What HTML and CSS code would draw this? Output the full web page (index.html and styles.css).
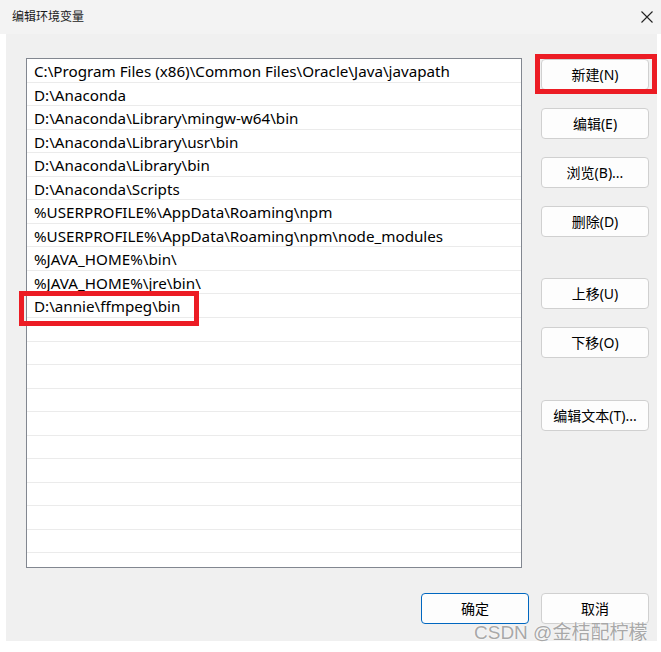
FILE: index.html
```html
<!DOCTYPE html>
<html lang="zh-CN">
<head>
<meta charset="utf-8">
<title>编辑环境变量</title>
<link rel="stylesheet" href="styles.css">
</head>
<body>
<div class="window">
  <div class="titlebar">
    <span class="title">编辑环境变量</span>
    <svg class="close" width="12" height="12" viewBox="0 0 12 12"><path d="M0.5 0.5 L11.5 11.5 M11.5 0.5 L0.5 11.5" stroke="#222" stroke-width="1.1" fill="none"/></svg>
  </div>
  <div class="content">
    <div class="main">
      <div class="list">
        <div class="row">C:\Program Files (x86)\Common Files\Oracle\Java\javapath</div>
        <div class="row">D:\Anaconda</div>
        <div class="row">D:\Anaconda\Library\mingw-w64\bin</div>
        <div class="row">D:\Anaconda\Library\usr\bin</div>
        <div class="row">D:\Anaconda\Library\bin</div>
        <div class="row">D:\Anaconda\Scripts</div>
        <div class="row">%USERPROFILE%\AppData\Roaming\npm</div>
        <div class="row">%USERPROFILE%\AppData\Roaming\npm\node_modules</div>
        <div class="row">%JAVA_HOME%\bin\</div>
        <div class="row">%JAVA_HOME%\jre\bin\</div>
        <div class="row">D:\annie\ffmpeg\bin</div>
        <div class="row"></div><div class="row"></div><div class="row"></div>
        <div class="row"></div><div class="row"></div><div class="row"></div>
        <div class="row"></div><div class="row"></div><div class="row"></div>
        <div class="row"></div><div class="row"></div>
      </div>
      <div class="buttons">
        <button class="btn">新建(N)</button>
        <button class="btn">编辑(E)</button>
        <button class="btn">浏览(B)...</button>
        <button class="btn">删除(D)</button>
        <button class="btn gap-lg">上移(U)</button>
        <button class="btn">下移(O)</button>
        <button class="btn gap-xl">编辑文本(T)...</button>
      </div>
    </div>
    <div class="footer">
      <button class="btn primary">确定</button>
      <button class="btn">取消</button>
    </div>
  </div>
  <div class="mark mark-new"></div>
  <div class="mark mark-row"></div>
  <div class="watermark">CSDN @金桔配柠檬</div>
</div>
</body>
</html>
```
FILE: styles.css
```css
html, body {
  margin: 0;
  padding: 0;
  background: #ffffff;
}
body {
  width: 661px;
  height: 652px;
  overflow: hidden;
  font-family: "Noto Sans", "Noto Sans CJK SC", sans-serif;
  color: #000;
}
.window {
  position: relative;
  margin-left: 6px;
  width: 651px;
  height: 641px;
  background: #f0f0f0;
}
.titlebar {
  height: 34px;
  margin-left: -6px;
  width: 661px;
  background: #f3f3f3;
  display: flex;
  align-items: center;
  justify-content: space-between;
  box-sizing: border-box;
  padding: 0 8px 4px 12px;
}
.title {
  font-family: "Noto Sans CJK SC", sans-serif;
  font-size: 12px;
  color: #1a1a1a;
}
.close {
  display: block;
  margin-top: 3px;
}
.content {
  padding-top: 24px;
}
.main {
  display: flex;
  align-items: flex-start;
}
.list {
  margin-left: 20px;
  width: 496px;
  height: 510px;
  box-sizing: border-box;
  border: 1px solid #828790;
  background: #fff;
  overflow: hidden;
}
.row {
  height: 23.55px;
  box-sizing: border-box;
  border-bottom: 1px solid #ebebeb;
  padding-left: 7px;
  font-size: 15.2px;
  line-height: 24px;
  white-space: nowrap;
  color: #000;
}
.buttons {
  margin-left: 19px;
  padding-top: 1px;
  display: flex;
  flex-direction: column;
  gap: 18px;
}
.btn {
  width: 108px;
  height: 31px;
  box-sizing: border-box;
  border: 1px solid #d0d0d0;
  border-radius: 4px;
  background: #fdfdfd;
  font-family: "Noto Sans", "Noto Sans CJK SC", sans-serif;
  font-size: 14px;
  color: #000;
  padding: 0;
  line-height: 28px;
}
.gap-lg {
  margin-top: 23px;
}
.gap-xl {
  margin-top: 24px;
}
.footer {
  margin-top: 25px;
  display: flex;
  justify-content: flex-end;
  gap: 12px;
  padding-right: 8px;
}
.primary {
  border-color: #0067c0;
}
.mark {
  position: absolute;
  border: 5px solid #ec1c24;
  box-sizing: border-box;
}
.mark-new {
  left: 529px;
  top: 54px;
  width: 122px;
  height: 40px;
}
.mark-row {
  left: 13px;
  top: 291px;
  width: 180px;
  height: 35px;
}
.watermark {
  position: absolute;
  left: 468px;
  top: 621px;
  font-family: "Liberation Sans", "Noto Sans CJK SC", sans-serif;
  font-size: 19px;
  line-height: 24px;
  color: #a8a8a8;
  text-shadow: 0 0 2px #fff, 0 0 1px #fff;
  white-space: nowrap;
}
```
